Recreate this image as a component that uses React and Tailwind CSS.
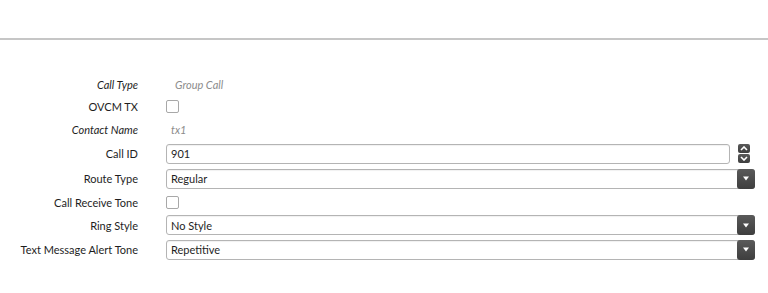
import React from 'react';

const Caret = () => (
    <svg width="8" height="5" viewBox="0 0 8 5">
        <path d="M1 0.5 L7 0.5 L4 4.5 Z" fill="#ffffff" />
    </svg>
);

const Chevron = ({ up }) => (
    <svg width="8" height="5" viewBox="0 0 8 5">
        <path d={up ? 'M1 4 L4 1 L7 4' : 'M1 1 L4 4 L7 1'} stroke="#ffffff" strokeWidth="1.6" fill="none" />
    </svg>
);

const Row = ({ label, italic, h, children }) => (
    <div className="flex items-center" style={{ height: h }}>
        <div className={'w-[138px] shrink-0 text-right text-[#1e1e1e] ' + (italic ? 'italic' : '')}>{label}</div>
        <div className="ml-[28px] flex-1 flex items-center pr-[13px]">{children}</div>
    </div>
);

const Box = () => <div className="w-[13px] h-[13px] border border-[#a8a8a8] rounded-[2px] bg-white" />;

const Select = ({ value }) => (
    <div className="flex-1 h-[20px] flex items-center border border-[#b4b4b4] rounded-[3px] bg-white shadow-[inset_0_1px_1px_rgba(0,0,0,0.06)]">
        <span className="flex-1 pl-[4px] text-[#1e1e1e]">{value}</span>
        <div className="w-[18px] h-[20px] -mr-px rounded-[3px] bg-gradient-to-b from-[#5a5a5a] to-[#3e3e3e] flex items-center justify-center">
            <Caret />
        </div>
    </div>
);

export default function App() {
    return (
        <div className="w-[768px] h-[293px] bg-white overflow-hidden text-[11px] leading-none" style={{ fontFamily: '"Segoe UI", Lato, "Open Sans", sans-serif' }}>
            <div className="pt-[38px]">
                <div className="h-[2px] bg-[#c6c6c6]" />
            </div>
            <div className="mt-[33px] flex flex-col">
                <Row label="Call Type" italic h={22}>
                    <span className="italic text-[#8c8c8c] pl-[9px]">Group Call</span>
                </Row>
                <Row label="OVCM TX" h={22}>
                    <Box />
                </Row>
                <Row label="Contact Name" italic h={24}>
                    <span className="italic text-[#8c8c8c] pl-[5px]">tx1</span>
                </Row>
                <Row label="Call ID" h={25}>
                    <div className="flex-1 h-[20px] flex items-center border border-[#b4b4b4] rounded-[3px] bg-white shadow-[inset_0_1px_1px_rgba(0,0,0,0.06)] mr-[8px]">
                        <span className="pl-[4px] text-[#1e1e1e]">901</span>
                    </div>
                    <div className="flex flex-col gap-px mr-[5px]">
                        <div className="w-[12px] h-[9px] rounded-[2px] bg-gradient-to-b from-[#5a5a5a] to-[#3e3e3e] flex items-center justify-center"><Chevron up /></div>
                        <div className="w-[12px] h-[9px] rounded-[2px] bg-gradient-to-b from-[#5a5a5a] to-[#3e3e3e] flex items-center justify-center"><Chevron /></div>
                    </div>
                </Row>
                <Row label="Route Type" h={25}>
                    <Select value="Regular" />
                </Row>
                <Row label="Call Receive Tone" h={22}>
                    <Box />
                </Row>
                <Row label="Ring Style" h={24}>
                    <Select value="No Style" />
                </Row>
                <Row label="Text Message Alert Tone" h={25}>
                    <Select value="Repetitive" />
                </Row>
            </div>
        </div>
    );
}
